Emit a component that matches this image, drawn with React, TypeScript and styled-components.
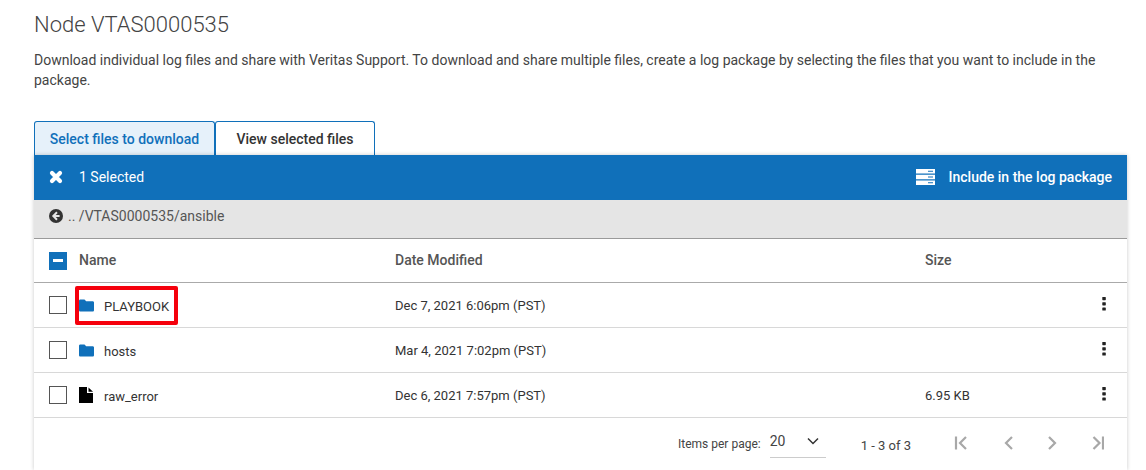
import React from "react";
import styled, { createGlobalStyle } from "styled-components";

const Global = createGlobalStyle`
  html, body { margin: 0; padding: 0; background: #fff; overflow: hidden; }
  body { font-family: Roboto, "Liberation Sans", sans-serif; color: #333; }
  #root { width: 1146px; height: 470px; overflow: hidden; }
`;

const Page = styled.div`
  padding: 13px 19px 0 34px;
  display: flex;
  flex-direction: column;
`;
const Title = styled.h1`
  margin: 0;
  height: 24px;
  line-height: 24px;
  font-size: 22px;
  font-weight: 300;
  color: #444;
`;
const Description = styled.p`
  margin: 13px 0 0;
  font-size: 14px;
  line-height: 20px;
  color: #444;
  height: 50px;
`;
const Tabs = styled.div`
  display: flex;
  height: 34px;
  margin-top: 21px;
`;
const Tab = styled.button<{ $active?: boolean; $w: number }>`
  box-sizing: border-box;
  width: ${(p) => p.$w}px;
  height: 34px;
  padding: 1px 0 0;
  border: 1px solid #1070ba;
  border-bottom: none;
  border-radius: 3px 3px 0 0;
  background: ${(p) => (p.$active ? "#e6f1fa" : "#fff")};
  color: ${(p) => (p.$active ? "#1070ba" : "#333")};
  font: 500 14px Roboto, sans-serif;
`;
const Panel = styled.div`
  box-shadow: 0 0 4px rgba(0, 0, 0, 0.22);
  height: 315px;
  display: flex;
  flex-direction: column;
`;
const ActionBar = styled.div`
  box-sizing: border-box;
  height: 45px;
  flex: none;
  background: #1070ba;
  color: #fff;
  display: flex;
  align-items: center;
  padding: 0 15px 1px 15px;
  font-size: 14px;
`;
const SelectedLabel = styled.span`
  margin-left: 16px;
  font-weight: 400;
`;
const PackageAction = styled.div`
  margin-left: auto;
  display: flex;
  align-items: center;
  gap: 14px;
  font-weight: 500;
`;
const PathBar = styled.div`
  height: 39px;
  flex: none;
  box-sizing: border-box;
  background: #e5e5e5;
  border-bottom: 1px solid #9a9a9a;
  display: flex;
  align-items: center;
  padding: 0 0 7px 15px;
  gap: 5px;
  font-size: 14px;
  color: #555;
`;
const Row = styled.div<{ $head?: boolean }>`
  display: grid;
  grid-template-columns: 30px 316px 530px 1fr 25px;
  align-items: center;
  box-sizing: border-box;
  height: ${(p) => (p.$head ? 44 : 45)}px;
  flex: none;
  padding-left: 15px;
  border-bottom: 1px solid ${(p) => (p.$head ? "#aaa" : "#d8d8d8")};
  font-size: ${(p) => (p.$head ? 14 : 13)}px;
  font-weight: ${(p) => (p.$head ? 500 : 400)};
  color: ${(p) => (p.$head ? "#555" : "#333")};
  &:last-of-type { border-bottom: 1px solid #aaa; }
`;
const HeadLabel = styled.span`
  margin-bottom: 2px;
`;
const CheckBox = styled.span<{ $partial?: boolean }>`
  box-sizing: border-box;
  width: 18px;
  height: 18px;
  border: ${(p) => (p.$partial ? "none" : "1px solid #555")};
  background: ${(p) => (p.$partial ? "#1070ba" : "#fff")};
  display: flex;
  align-items: center;
  justify-content: center;
  &::after {
    content: "";
    display: ${(p) => (p.$partial ? "block" : "none")};
    width: 10px;
    height: 3px;
    background: #fff;
  }
`;
const NameCell = styled.div`
  display: flex;
  align-items: center;
  gap: 10px;
  position: relative;
`;
const NameText = styled.span`
  padding-top: 2px;
`;
const Highlight = styled.span`
  position: absolute;
  left: -4px;
  top: -11px;
  width: 103px;
  height: 39px;
  box-sizing: border-box;
  border: 4px solid #f5000c;
  border-radius: 2px;
`;
const IconSlot = styled.span`
  width: 15px;
  height: 16px;
  display: flex;
  align-items: center;
  justify-content: center;
  flex: none;
`;
const Kebab = styled.svg`
  display: block;
  margin-top: -3px;
`;
const Footer = styled.div`
  flex: 1;
  display: flex;
  align-items: center;
  font-size: 12px;
  color: #444;
`;
const PerPage = styled.span`
  margin-left: 644px;
`;
const PageSelect = styled.div`
  box-sizing: border-box;
  width: 56px;
  height: 32px;
  margin: 0 0 4px 9px;
  border-bottom: 1px solid #ccc;
  display: flex;
  align-items: center;
  justify-content: space-between;
  padding: 0 7px 1px 0;
  font-size: 14px;
  color: #444;
`;
const Range = styled.span`
  margin: 2px 0 0 35px;
  font-size: 13px;
  color: #444;
`;
const Pager = styled.div`
  margin: 0 0 2px 42px;
  display: flex;
  gap: 29px;
`;

const Folder = () => (
  <svg width="15" height="13" viewBox="0 0 15 13"><path d="M1.300 0.500h4.200l1.700 1.800h6.500c.7 0 1.300.6 1.300 1.300v7.600c0 .7-.6 1.300-1.300 1.300H1.300c-.7 0-1.300-.6-1.300-1.300V1.800C0 1.100.6.500 1.300.500z" fill="#1070ba" /></svg>
);
const FileIcon = () => (
  <svg width="14" height="16" viewBox="0 0 14 16" style={{ marginLeft: -1 }}><path d="M0 0h8v6h6v10H0zM9.500 0.500L14 4.800H9.500z" fill="#000" /></svg>
);
const Dots = () => (
  <Kebab width="4" height="14" viewBox="0 0 4 14" fill="#222"><rect x=".3" width="3.500" height="3.200" rx=".6" /><rect x=".3" y="5.200" width="3.500" height="3.200" rx=".6" /><rect x=".3" y="10.400" width="3.500" height="3.200" rx=".6" /></Kebab>
);
const Pg = ({ d }: { d: string }) => (
  <svg width="16" height="16" viewBox="0 0 16 16" fill="none" stroke="#a8a8a8" strokeWidth="2.200"><path d={d} /></svg>
);

const rows = [
  { name: "PLAYBOOK", date: "Dec 7, 2021 6:06pm (PST)", size: "", file: false, mark: true },
  { name: "hosts", date: "Mar 4, 2021 7:02pm (PST)", size: "", file: false },
  { name: "raw_error", date: "Dec 6, 2021 7:57pm (PST)", size: "6.95 KB", file: true },
];

export default function App() {
  return (
    <Page>
      <Global />
      <Title>Node VTAS0000535</Title>
      <Description>
        Download individual log files and share with Veritas Support. To download and share multiple files, create a log package by selecting the files that you want to include in the package.
      </Description>
      <Tabs>
        <Tab $active $w={181}>Select files to download</Tab>
        <Tab $w={160}>View selected files</Tab>
      </Tabs>
      <Panel>
        <ActionBar>
          <svg width="14" height="14" viewBox="0 0 14 14" stroke="#fff" strokeWidth="4.200" strokeLinecap="round"><path d="M3 3l8 8M11 3l-8 8" /></svg>
          <SelectedLabel>1 Selected</SelectedLabel>
          <PackageAction>
            <svg width="19" height="16" viewBox="0 0 19 16" fill="#fff" style={{ marginLeft: -1 }}>
              <path d="M0 0h19v4.500H0zM0 5.800h19v4.400H0zM0 11.500h19V16H0z" />
              <path d="M12 1.700h5v1h-5zM12 7.500h5v1h-5zM12 13.200h5v1h-5z" fill="#1070ba" />
            </svg>
            Include in the log package
          </PackageAction>
        </ActionBar>
        <PathBar>
          <svg width="14" height="14" viewBox="0 0 14 14"><circle cx="7" cy="7" r="7" fill="#333" /><path d="M8 3.200L4.300 7 8 10.800M4.600 7h6" fill="none" stroke="#e5e5e5" strokeWidth="2" /></svg>
          <span>.. /VTAS0000535/ansible</span>
        </PathBar>
        <Row $head>
          <CheckBox $partial />
          <HeadLabel>Name</HeadLabel>
          <HeadLabel>Date Modified</HeadLabel>
          <HeadLabel>Size</HeadLabel>
          <span />
        </Row>
        {rows.map((r) => (
          <Row key={r.name}>
            <CheckBox />
            <NameCell>
              {r.mark && <Highlight />}
              <IconSlot>{r.file ? <FileIcon /> : <Folder />}</IconSlot>
              <NameText>{r.name}</NameText>
            </NameCell>
            <span>{r.date}</span>
            <span>{r.size}</span>
            <Dots />
          </Row>
        ))}
        <Footer>
          <PerPage>Items per page:</PerPage>
          <PageSelect>
            <span>20</span>
            <svg width="12" height="8" viewBox="0 0 12 8" fill="none" stroke="#333" strokeWidth="1.500"><path d="M1 1.500l5 5 5-5" /></svg>
          </PageSelect>
          <Range>1 - 3 of 3</Range>
          <Pager>
            <Pg d="M3 1.500v13M13 2L7 8l6 6" />
            <Pg d="M14 2L8 8l6 6" />
            <Pg d="M6 2l6 6-6 6" />
            <Pg d="M15 1.500v13M5.500 2l6 6-6 6" />
          </Pager>
        </Footer>
      </Panel>
    </Page>
  );
}
